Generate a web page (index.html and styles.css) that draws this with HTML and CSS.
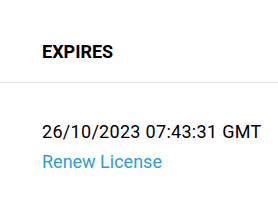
FILE: index.html
```html
<!DOCTYPE html>
<html lang="en">
<head>
    <meta charset="UTF-8">
    <meta name="viewport" content="width=device-width, initial-scale=1.0">
    <title>License</title>
    <link rel="stylesheet" href="styles.css">
</head>
<body>
    <div class="table">
        <div class="table-head">
            <div class="cell head-cell">EXPIRES</div>
        </div>
        <div class="table-row">
            <div class="cell">
                <div class="expires-date">26/10/2023 07:43:31 GMT</div>
                <a href="#" class="renew-link">Renew License</a>
            </div>
        </div>
    </div>
</body>
</html>
```

FILE: styles.css
```css
body {
    font-family: Roboto, "Noto Sans", sans-serif;
    margin: 0;
    padding: 0;
    background-color: #ffffff;
    color: #000000;
}

.table {
    width: 100%;
}

.table-head {
    border-bottom: 1px solid #e5e5e5;
}

.cell {
    padding: 0 0 0 42px;
    white-space: nowrap;
}

.head-cell {
    font-size: 18px;
    font-weight: bold;
    padding-top: 41px;
    padding-bottom: 20px;
    line-height: 21px;
}

.table-row .cell {
    padding-top: 37px;
}

.expires-date {
    font-size: 18px;
    line-height: 24px;
    letter-spacing: 0.3px;
}

.renew-link {
    display: block;
    margin-top: 6px;
    font-size: 18px;
    line-height: 24px;
    color: #2d9cdb;
    text-decoration: none;
}
```
